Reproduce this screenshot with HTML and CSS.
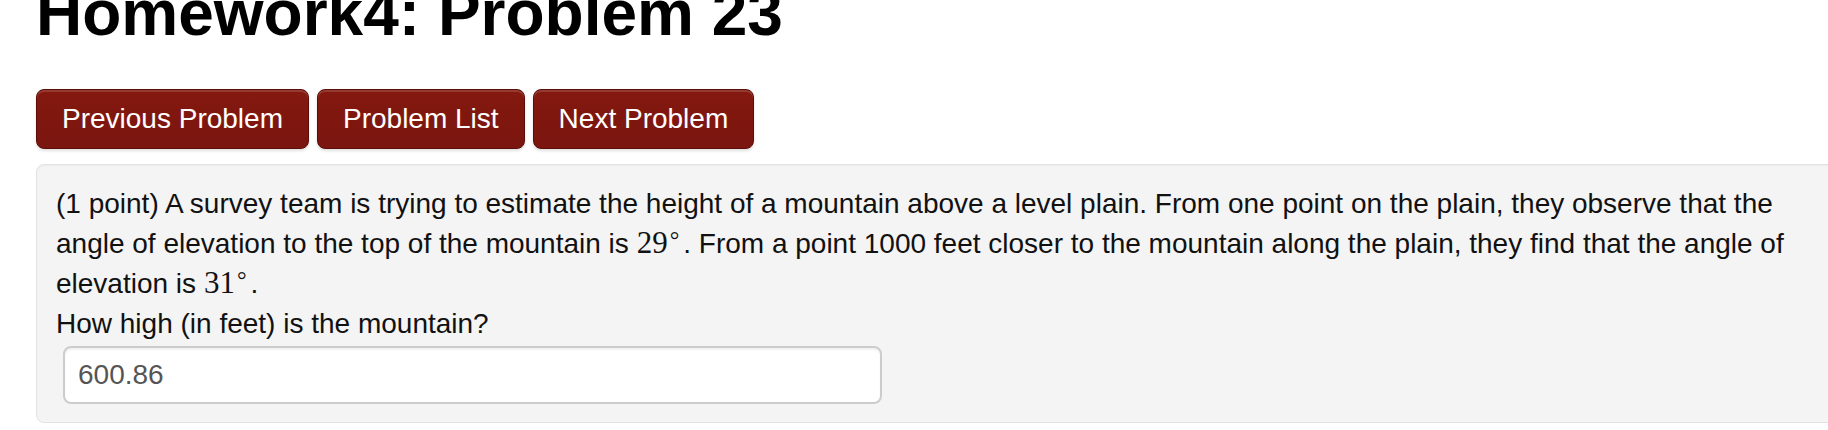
FILE: index.html
```html
<!DOCTYPE html>
<html lang="en">
<head>
  <meta charset="UTF-8">
  <title>Homework4: Problem 23</title>
  <link rel="stylesheet" href="styles.css">
</head>
<body>

  <div class="page">
    <h1 class="page-title">Homework4: Problem 23</h1>

    <div class="problem-nav">
      <a href="#" class="nav-btn">Previous Problem</a>
      <a href="#" class="nav-btn">Problem List</a>
      <a href="#" class="nav-btn">Next Problem</a>
    </div>

    <div class="problem-well">
      <p class="problem-text">
        (1 point) A survey team is trying to estimate the height of a mountain above a level plain. From one point on the plain, they observe that the angle of elevation to the top of the mountain is <span class="math">29<span class="deg">°</span></span>. From a point 1000 feet closer to the mountain along the plain, they find that the angle of elevation is <span class="math">31<span class="deg">°</span></span>.<br>
        How high (in feet) is the mountain?
      </p>
      <input type="text" class="answer-input" value="600.86">
    </div>
  </div>

</body>
</html>
```

FILE: styles.css
```css
* {
  margin: 0;
  padding: 0;
  box-sizing: border-box;
}

html,
body {
  overflow: hidden;
}

body {
  font-family: "Liberation Sans", Arial, Helvetica, sans-serif;
  background: #fff;
  color: #111;
}

.page {
  padding-left: 36px;
}

.page-title {
  font-size: 64px;
  font-weight: bold;
  line-height: 80px;
  margin-top: -27px;
  color: #000;
}

.problem-nav {
  display: flex;
  gap: 8px;
  margin-top: 36px;
}

.nav-btn {
  display: inline-block;
  font-size: 28px;
  line-height: 40px;
  padding: 9px 25px;
  color: #fff;
  text-decoration: none;
  background: linear-gradient(#84190f, #7a150f);
  border: 1px solid #5c0f0a;
  border-radius: 8px;
  box-shadow: inset 0 2px 0 rgba(255, 255, 255, 0.15), 0 2px 3px rgba(0, 0, 0, 0.12);
}

.problem-well {
  width: 1814px;
  margin-top: 15px;
  padding: 19px 19px 18px;
  background: #f4f4f4;
  border: 1px solid #e2e2e2;
  border-radius: 8px;
  box-shadow: inset 0 1px 2px rgba(0, 0, 0, 0.04);
}

.problem-text {
  font-size: 28px;
  line-height: 40px;
}

.math {
  font-family: "Liberation Serif", "Times New Roman", serif;
  font-size: 31px;
  line-height: 1;
  margin-right: 4px;
}

.deg {
  font-size: 24px;
  margin-left: 2px;
  vertical-align: 5px;
}

.answer-input {
  display: block;
  width: 819px;
  height: 58px;
  margin: 2px 0 0 7px;
  padding: 0 13px;
  font-family: "Liberation Sans", Arial, sans-serif;
  font-size: 28px;
  color: #555;
  background: #fff;
  border: 2px solid #ccc;
  border-radius: 8px;
  box-shadow: inset 0 2px 2px rgba(0, 0, 0, 0.06);
  outline: none;
}
```
